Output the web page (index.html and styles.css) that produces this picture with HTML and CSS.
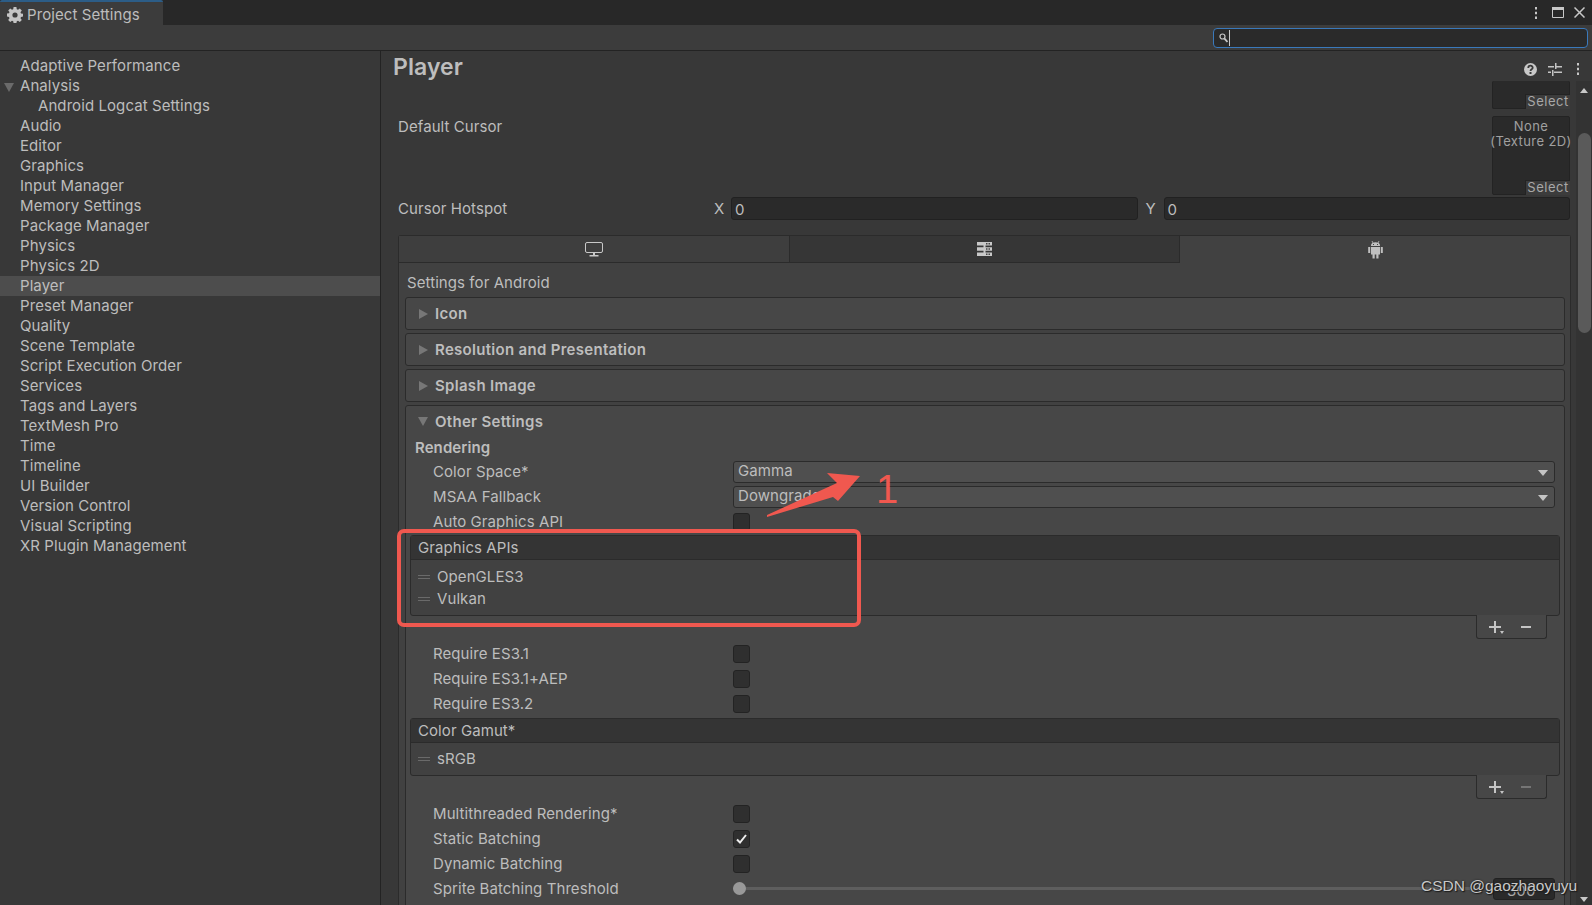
FILE: index.html
```html
<!DOCTYPE html>
<html lang="en">
<head>
    <meta charset="UTF-8">
    <title>Project Settings</title>
    <link rel="stylesheet" href="styles.css">
</head>
<body>
    <div class="window">
        <div class="titlebar">
            <div class="tab">
                <svg class="gear" width="16" height="16" viewBox="0 0 16 16"><path fill="#c4c4c4" fill-rule="evenodd" d="M6.600 0h2.800l.4 2.200 1.200.5L12.800 1.400l2 2-1.300 1.800.5 1.200 2 .4v2.800l-2 .4-.5 1.200 1.300 1.800-2 2-1.800-1.300-1.200.5-.4 2H6.600l-.4-2-1.200-.5-1.800 1.300-2-2 1.300-1.800-.5-1.200-2-.4V6.600l2-.4.5-1.200L1.200 3.400l2-2L5 2.700l1.200-.5zM8 5.400a2.600 2.600 0 1 0 0 5.200 2.600 2.600 0 0 0 0-5.200z"/></svg>
                <span>Project Settings</span>
            </div>
            <div class="window-btns">
                <svg width="4" height="12" viewBox="0 0 4 12"><path fill="#c8c8c8" d="M1 0h2v2.400H1zM1 4.800h2v2.400H1zM1 9.600h2V12H1z"/></svg>
                <svg class="max-btn" width="12" height="11" viewBox="0 0 12 11"><path fill="none" stroke="#c8c8c8" d="M.5 1.500h11v9H.5z"/><path fill="#c8c8c8" d="M0 0h12v3H0z"/></svg>
                <svg width="11" height="11" viewBox="0 0 11 11"><path stroke="#c8c8c8" stroke-width="1.500" d="M.5.500l10 10M10.500.500l-10 10"/></svg>
            </div>
        </div>

        <div class="toolbar">
            <div class="search">
                <svg width="9" height="10" viewBox="0 0 9 10"><circle cx="3.500" cy="3.500" r="2.500" fill="none" stroke="#c8c8c8" stroke-width="1.200"/><path stroke="#c8c8c8" stroke-width="1.800" d="M5.300 5.300L8.500 9"/></svg>
                <span class="caret"></span>
            </div>
        </div>

        <div class="content">
            <div class="sidebar">
                <div class="side-item">Adaptive Performance</div>
                <div class="side-item"><span class="side-arrow"></span>Analysis</div>
                <div class="side-item side-child">Android Logcat Settings</div>
                <div class="side-item">Audio</div>
                <div class="side-item">Editor</div>
                <div class="side-item">Graphics</div>
                <div class="side-item">Input Manager</div>
                <div class="side-item">Memory Settings</div>
                <div class="side-item">Package Manager</div>
                <div class="side-item">Physics</div>
                <div class="side-item">Physics 2D</div>
                <div class="side-item selected">Player</div>
                <div class="side-item">Preset Manager</div>
                <div class="side-item">Quality</div>
                <div class="side-item">Scene Template</div>
                <div class="side-item">Script Execution Order</div>
                <div class="side-item">Services</div>
                <div class="side-item">Tags and Layers</div>
                <div class="side-item">TextMesh Pro</div>
                <div class="side-item">Time</div>
                <div class="side-item">Timeline</div>
                <div class="side-item">UI Builder</div>
                <div class="side-item">Version Control</div>
                <div class="side-item">Visual Scripting</div>
                <div class="side-item">XR Plugin Management</div>
            </div>

            <div class="main">
                <div class="title-row">
                    <h1>Player</h1>
                    <div class="title-icons">
                        <svg width="13" height="13" viewBox="0 0 13 13"><circle cx="6.500" cy="6.500" r="6.500" fill="#c8c8c8"/><path fill="none" stroke="#383838" stroke-width="1.800" d="M4.300 5c0-3 4.400-3 4.400-.3 0 1.700-2.200 1.500-2.200 3.300"/><path fill="#383838" d="M5.500 9h2v2h-2z"/></svg>
                        <svg width="14" height="13" viewBox="0 0 14 13"><path fill="#c4c4c4" d="M0 3h6v1.500H0zM8 3h6v1.500H8zM7 0h1.500v6H7zM0 8.500h3v1.500H0zM6 8.500h8v1.500H6zM4 7h1.500v6H4z"/></svg>
                        <svg class="more-btn" width="4" height="12" viewBox="0 0 4 12"><path fill="#c8c8c8" d="M1 0h2v2.400H1zM1 4.800h2v2.400H1zM1 9.600h2V12H1z"/></svg>
                    </div>
                </div>

                <div class="scroll-area">
                    <div class="inspector">
                        <div class="object-field object-cut">
                            <span class="select-btn">Select</span>
                        </div>
                        <div class="cursor-row">
                            <span class="cursor-label">Default Cursor</span>
                            <div class="object-field object-full">
                                <span class="object-name">None<br>(Texture 2D)</span>
                                <span class="select-btn">Select</span>
                            </div>
                        </div>
                        <div class="hotspot-row">
                            <span class="hotspot-label">Cursor Hotspot</span>
                            <span class="axis">X</span>
                            <div class="number-input">0</div>
                            <span class="axis">Y</span>
                            <div class="number-input">0</div>
                        </div>

                        <div class="platform-tabs">
                            <div class="platform-tab">
                                <svg width="18" height="15" viewBox="0 0 18 15"><rect x=".5" y=".5" width="17" height="10" rx="1.500" fill="none" stroke="#c8c8c8"/><path fill="#c8c8c8" d="M8 11h2v2.500H8zM4.500 13h9v1.500h-9z"/></svg>
                            </div>
                            <div class="platform-tab dark">
                                <svg width="15" height="14" viewBox="0 0 15 14"><path fill="#c8c8c8" d="M0 0h15v3.400H0zM0 5.300h15v3.400H0zM0 10.600h15V14H0z"/><path fill="#c8c8c8" d="M6.500 3h2v8h-2z"/><path fill="#444" d="M9 1h1.500v1.400H9zM11.500 1H13v1.400h-1.500zM9 6.300h1.500v1.400H9zM11.500 6.300H13v1.400h-1.500zM9 11.600h1.500V13H9zM11.500 11.600H13V13h-1.500z"/></svg>
                            </div>
                            <div class="platform-tab">
                                <svg width="15" height="18" viewBox="0 0 15 18"><path fill="#c0c0c0" d="M3 4.500C3 2 5 1.200 7.500 1.200S12 2 12 4.500V5H3zM3 6h9v7.500H3zM.2 6h2v6h-2zM12.800 6h2v6h-2zM4.500 13h2.200v4.500H4.500zM8.300 13h2.200v4.500H8.300z"/><path stroke="#c0c0c0" stroke-width=".8" d="M4 0l1 2M11 0l-1 2"/><path fill="#444" d="M5 3h1v1H5zM9 3h1v1H9z"/></svg>
                            </div>
                        </div>

                        <div class="platform-body">
                            <div class="settings-for">Settings for Android</div>

                            <div class="foldout"><span class="arrow-right"></span>Icon</div>
                            <div class="foldout"><span class="arrow-right"></span>Resolution and Presentation</div>
                            <div class="foldout"><span class="arrow-right"></span>Splash Image</div>

                            <div class="foldout-open">
                                <div class="foldout-head"><span class="arrow-down"></span>Other Settings</div>
                                <div class="section-head">Rendering</div>

                                <div class="prop prop-first">
                                    <label>Color Space*</label>
                                    <div class="popup">Gamma<span class="popup-arrow"></span></div>
                                </div>
                                <div class="prop">
                                    <label>MSAA Fallback</label>
                                    <div class="popup">Downgrade<span class="popup-arrow"></span></div>
                                </div>
                                <div class="prop">
                                    <label>Auto Graphics API</label>
                                    <span class="check"></span>
                                </div>

                                <div class="reorder-list">
                                    <div class="list-head">Graphics APIs</div>
                                    <div class="list-body">
                                        <div class="list-item"><span class="handle"></span>OpenGLES3</div>
                                        <div class="list-item"><span class="handle"></span>Vulkan</div>
                                    </div>
                                </div>
                                <div class="list-footer"><span class="plus"><i></i></span><span class="minus"></span></div>

                                <div class="prop prop-after">
                                    <label>Require ES3.1</label>
                                    <span class="check"></span>
                                </div>
                                <div class="prop">
                                    <label>Require ES3.1+AEP</label>
                                    <span class="check"></span>
                                </div>
                                <div class="prop">
                                    <label>Require ES3.2</label>
                                    <span class="check"></span>
                                </div>

                                <div class="reorder-list gamut">
                                    <div class="list-head">Color Gamut*</div>
                                    <div class="list-body one">
                                        <div class="list-item"><span class="handle"></span>sRGB</div>
                                    </div>
                                </div>
                                <div class="list-footer"><span class="plus"><i></i></span><span class="minus off"></span></div>

                                <div class="prop prop-after">
                                    <label>Multithreaded Rendering*</label>
                                    <span class="check"></span>
                                </div>
                                <div class="prop">
                                    <label>Static Batching</label>
                                    <span class="check">
                                        <svg width="11" height="10" viewBox="0 0 11 10"><path fill="none" stroke="#eee" stroke-width="2" d="M1 5.500l3 3 6-7.500"/></svg>
                                    </span>
                                </div>
                                <div class="prop">
                                    <label>Dynamic Batching</label>
                                    <span class="check"></span>
                                </div>
                                <div class="prop">
                                    <label>Sprite Batching Threshold</label>
                                    <div class="slider"><span class="thumb"></span></div>
                                    <div class="slider-value">300</div>
                                </div>
                            </div>
                        </div>
                    </div>

                    <div class="scrollbar">
                        <span class="scroll-up"></span>
                        <span class="scroll-thumb"></span>
                        <span class="scroll-down"></span>
                    </div>
                </div>
            </div>
        </div>

        <!-- annotation drawn over the screenshot -->
        <div class="mark-box"></div>
        <svg class="mark-arrow" width="100" height="50" viewBox="0 0 100 50"><path fill="#f0584f" d="M1 44L71 12 61 2 94 5 72 30 67 26 1 46z"/></svg>
        <div class="mark-num">1</div>
        <div class="watermark">CSDN @gaozhaoyuyu</div>
    </div>
</body>
</html>
```

FILE: styles.css
```css
* {
    box-sizing: border-box;
}

body {
    margin: 0;
    overflow: hidden;
    font-family: Inter, 'Noto Sans', sans-serif;
    font-size: 15px;
    letter-spacing: .08px;
    color: #bdbdbd;
    background-color: #383838;
}

.window {
    position: relative;
    width: 1592px;
    height: 905px;
    display: flex;
    flex-direction: column;
    overflow: hidden;
}

/* title bar */
.titlebar {
    height: 25px;
    flex: none;
    display: flex;
    justify-content: space-between;
    background-color: #282828;
}

.tab {
    width: 163px;
    display: flex;
    align-items: center;
    gap: 4px;
    padding: 2px 0 0 7px;
    background-color: #3c3c3c;
    border-top: 2px solid #2c5d87;
    border-radius: 2px 2px 0 0;
}

.window-btns {
    display: flex;
    align-items: center;
    gap: 14px;
    padding-right: 7px;
}

.max-btn {
    margin-right: -4px;
}

.toolbar {
    height: 26px;
    flex: none;
    display: flex;
    justify-content: flex-end;
    align-items: center;
    padding-right: 4px;
    background-color: #3c3c3c;
    border-bottom: 1px solid #232323;
}

.search {
    width: 375px;
    height: 20px;
    display: flex;
    align-items: center;
    gap: 1px;
    padding-left: 5px;
    background-color: #2a2a2a;
    border: 1px solid #3a79bb;
    border-radius: 4px;
}

.caret {
    width: 1px;
    height: 16px;
    background-color: #c8c8c8;
}

.content {
    flex: 1;
    display: flex;
    min-height: 0;
}

/* left list */
.sidebar {
    width: 381px;
    flex: none;
    padding-top: 5px;
    background-color: #383838;
    border-right: 1px solid #232323;
}

.side-item {
    position: relative;
    height: 20px;
    line-height: 20px;
    padding-left: 20px;
    white-space: nowrap;
}

.side-child {
    padding-left: 38px;
}

.selected {
    background-color: #4d4d4d;
}

.side-arrow {
    position: absolute;
    left: 4px;
    top: 7px;
    border-left: 5px solid transparent;
    border-right: 5px solid transparent;
    border-top: 9px solid #6a6a6a;
}

/* right panel */
.main {
    flex: 1;
    min-width: 0;
    display: flex;
    flex-direction: column;
}

.title-row {
    height: 30px;
    flex: none;
    display: flex;
    justify-content: space-between;
    align-items: center;
    padding: 2px 12px 0 12px;
}

h1 {
    margin: 0;
    font-size: 23px;
    font-weight: 600;
}

.title-icons {
    display: flex;
    align-items: center;
    gap: 11px;
    padding-top: 4px;
}

.more-btn {
    margin-left: 3px;
}

.scroll-area {
    flex: 1;
    min-height: 0;
    display: flex;
    overflow: hidden;
}

.inspector {
    flex: 1;
    min-width: 0;
    padding: 0 6px 0 17px;
}

/* object fields */
.object-field {
    position: relative;
    width: 78px;
    margin-left: auto;
    background-color: #2a2a2a;
    border: 1px solid #232323;
    border-radius: 2px;
}

.object-cut {
    height: 28px;
    border-top: 0;
}

.object-full {
    height: 79px;
    text-align: center;
    font-size: 13px;
    line-height: 15px;
    letter-spacing: .4px;
    color: #a0a0a0;
    margin-top: 7px;
}

.object-name {
    display: block;
    margin: 2px -3px 0 -3px;
    white-space: nowrap;
}

.select-btn {
    position: absolute;
    right: -1px;
    bottom: -1px;
    width: 45px;
    height: 15px;
    line-height: 12px;
    text-align: center;
    font-size: 13px;
    letter-spacing: .5px;
    color: #a8a8a8;
    background-color: #3c3c3c;
    border-left: 1px solid #232323;
    border-top: 1px solid #232323;
}

.cursor-row {
    display: flex;
    justify-content: space-between;
}

.cursor-label {
    margin-top: 8px;
}

.hotspot-row {
    height: 23px;
    margin-top: 2px;
    display: flex;
    align-items: center;
}

.hotspot-label {
    width: 316px;
}

.axis {
    width: 17px;
}

.axis + .number-input + .axis {
    margin-left: 8px;
    width: 18px;
}

.number-input {
    flex: 1;
    height: 23px;
    line-height: 24px;
    padding-left: 3px;
    background-color: #2a2a2a;
    border: 1px solid #212121;
    border-radius: 3px;
}

/* platform tabs */
.platform-tabs {
    height: 28px;
    margin-top: 15px;
    margin-right: -1px;
    display: flex;
    border: 1px solid #2b2b2b;
    border-bottom: 0;
    border-radius: 3px 3px 0 0;
}

.platform-tab {
    flex: 1;
    display: flex;
    align-items: center;
    justify-content: center;
    background-color: #3e3e3e;
    border-bottom: 1px solid #2b2b2b;
}

.platform-tab:first-child {
    border-right: 1px solid #2b2b2b;
}

.platform-tab.dark {
    background-color: #363636;
    border-right: 1px solid #2b2b2b;
}

.platform-tab:last-child {
    background-color: #414141;
    border-bottom: 0;
}

.platform-body {
    margin-right: -1px;
    height: 700px;
    padding: 8px 5px 0 6px;
    background-color: #414141;
    border-left: 1px solid #2b2b2b;
    border-right: 1px solid #2b2b2b;
}

.settings-for {
    height: 26px;
    line-height: 24px;
    padding-left: 2px;
}

.foldout,
.foldout-open {
    background-color: #474747;
    border: 1px solid #2b2b2b;
    border-radius: 3px;
}

.foldout {
    height: 33px;
    margin-bottom: 3px;
    display: flex;
    align-items: center;
    font-weight: 600;
    letter-spacing: .3px;
}

.foldout-open {
    height: 600px;
    padding: 0 4px 0 4px;
}

.foldout-head {
    height: 32px;
    padding-bottom: 2px;
    display: flex;
    align-items: center;
    font-weight: 600;
    letter-spacing: .3px;
    margin-left: -4px;
}

.arrow-right {
    margin: 0 7px 0 13px;
    border-top: 5px solid transparent;
    border-bottom: 5px solid transparent;
    border-left: 9px solid #777;
}

.arrow-down {
    margin: 0 7px 0 12px;
    border-left: 5px solid transparent;
    border-right: 5px solid transparent;
    border-top: 9px solid #777;
}

.section-head {
    height: 20px;
    line-height: 20px;
    padding-left: 5px;
    font-weight: 600;
}

/* property rows */
.prop {
    height: 25px;
    display: flex;
    align-items: center;
}

.prop label {
    width: 323px;
    flex: none;
    padding-left: 23px;
    white-space: nowrap;
}

.prop-first {
    margin-top: 1px;
}

.prop-after {
    margin-top: 2px;
}

.popup {
    position: relative;
    width: 822px;
    height: 22px;
    line-height: 18px;
    padding-left: 4px;
    background-color: #4f4f4f;
    border: 1px solid #2b2b2b;
    border-radius: 3px;
}

.popup-arrow {
    position: absolute;
    right: 6px;
    top: 8px;
    border-left: 5px solid transparent;
    border-right: 5px solid transparent;
    border-top: 6px solid #c4c4c4;
}

.check {
    width: 17px;
    height: 18px;
    display: flex;
    align-items: center;
    justify-content: center;
    background-color: #2f2f2f;
    border: 1px solid #232323;
    border-radius: 3px;
}

/* reorderable lists */
.reorder-list {
    width: 1150px;
    margin-top: 1px;
    background-color: #414141;
    border: 1px solid #2b2b2b;
    border-radius: 3px;
}

.gamut {
    margin-top: 2px;
}

.list-head {
    height: 24px;
    line-height: 24px;
    padding-left: 7px;
    background-color: #343434;
    border-bottom: 1px solid #2b2b2b;
}

.list-body {
    height: 55px;
    padding-top: 6px;
}

.list-body.one {
    height: 32px;
    padding-top: 5px;
}

.list-item {
    height: 22px;
    line-height: 22px;
    display: flex;
    align-items: center;
    padding-left: 7px;
}

.handle {
    width: 12px;
    height: 4px;
    margin-right: 7px;
    border-top: 1px solid #6a6a6a;
    border-bottom: 1px solid #6a6a6a;
}

.list-footer {
    width: 71px;
    height: 24px;
    margin: -1px 0 0 1066px;
    display: flex;
    align-items: center;
    gap: 20px;
    padding-left: 12px;
    background-color: #474747;
    border: 1px solid #2b2b2b;
    border-top: 0;
    border-radius: 0 0 3px 3px;
    position: relative;
}

.plus {
    position: relative;
    width: 12px;
    height: 12px;
    background:
        linear-gradient(#c4c4c4, #c4c4c4) center / 12px 2px no-repeat,
        linear-gradient(#c4c4c4, #c4c4c4) center / 2px 12px no-repeat;
}

.plus i {
    position: absolute;
    left: 11px;
    top: 10px;
    border-left: 2px solid transparent;
    border-right: 2px solid transparent;
    border-top: 3px solid #c4c4c4;
}

.minus {
    width: 10px;
    height: 2px;
    background-color: #c4c4c4;
}

.minus.off {
    background-color: #757575;
}

.slider {
    position: relative;
    width: 737px;
    height: 3px;
    background-color: #5e5e5e;
}

.thumb {
    position: absolute;
    left: 0;
    top: -5px;
    width: 13px;
    height: 13px;
    border-radius: 50%;
    background-color: #999;
}

.slider-value {
    width: 62px;
    height: 22px;
    margin-left: 23px;
    line-height: 24px;
    padding-left: 13px;
    color: #a8a8a8;
    background-color: #2a2a2a;
    border: 1px solid #212121;
    border-radius: 3px;
}

/* scrollbar */
.scrollbar {
    position: relative;
    width: 16px;
    flex: none;
    background-color: #333;
}

.scroll-up,
.scroll-down {
    position: absolute;
    left: 4px;
    border-left: 4px solid transparent;
    border-right: 4px solid transparent;
}

.scroll-up {
    top: 7px;
    border-bottom: 5px solid #c8c8c8;
}

.scroll-down {
    bottom: 3px;
    border-top: 5px solid #c8c8c8;
}

.scroll-thumb {
    position: absolute;
    left: 2px;
    top: 52px;
    width: 13px;
    height: 200px;
    border-radius: 7px;
    background-color: #5a5a5a;
}

/* annotation */
.mark-box {
    position: absolute;
    left: 397px;
    top: 529px;
    width: 464px;
    height: 98px;
    border: 4px solid #f0584f;
    border-radius: 7px;
}

.mark-arrow {
    position: absolute;
    left: 766px;
    top: 471px;
}

.mark-num {
    position: absolute;
    left: 876px;
    top: 467px;
    font-family: 'Liberation Sans', sans-serif;
    font-size: 40px;
    line-height: 44px;
    color: #f0584f;
}

.watermark {
    position: absolute;
    left: 1421px;
    top: 876px;
    font-family: 'Liberation Sans', sans-serif;
    font-size: 15.500px;
    letter-spacing: 0;
    line-height: 20px;
    color: #c8c8c8;
    text-shadow: 0 0 2px #1c1c1c, 1px 1px 1px #1c1c1c;
    white-space: nowrap;
}
```
